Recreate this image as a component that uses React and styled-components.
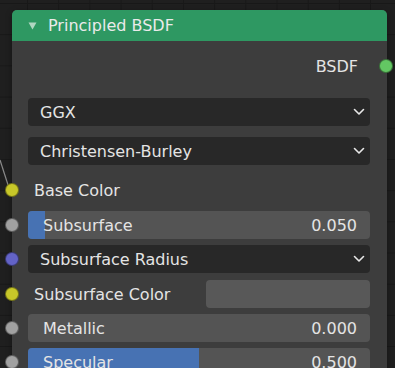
import React from 'react';
import styled, { createGlobalStyle } from 'styled-components';

const GlobalStyle = createGlobalStyle`
  html, body {
    margin: 0;
    padding: 0;
    background: #1f1f1f;
  }
`;

const SOCKET = {
  shader: '#63c763',
  color: '#c7c729',
  float: '#a1a1a1',
  vector: '#6363c7',
};

const Canvas = styled.div`
  position: relative;
  height: 368px;
  overflow: hidden;
  box-sizing: border-box;
  padding: 10px 0 0 12px;
  font-family: 'DejaVu Sans', 'Noto Sans', sans-serif;
  font-size: 16px;
  color: #e4e4e4;
  background-color: #1f1f1f;
  background-image:
    linear-gradient(to right, #181818 1px, transparent 1px),
    linear-gradient(to bottom, #181818 1px, transparent 1px);
  background-size: 31.2px 31.2px;
  background-position: 27px 3px;
`;

const Wire = styled.svg`
  position: absolute;
  left: 0;
  top: 150px;
`;

const Node = styled.div`
  position: relative;
  width: 375px;
  background: #3d3d3d;
  border-radius: 5px;
  box-shadow: 0 2px 6px rgba(0, 0, 0, 0.35);
`;

const Header = styled.div`
  display: flex;
  align-items: center;
  gap: 11px;
  height: 31px;
  padding-left: 16px;
  background: #2e9862;
  border-radius: 5px 5px 0 0;
`;

const Title = styled.span`
  color: #eaeaea;
  line-height: 1;
`;

const Body = styled.div`
  display: flex;
  flex-direction: column;
  padding: 13px 17px 0 16px;
`;

const Row = styled.div`
  position: relative;
  display: flex;
  align-items: center;
  height: ${p => p.$h || 28}px;
  margin-top: ${p => p.$mt || 0}px;
  justify-content: ${p => (p.$end ? 'flex-end' : 'flex-start')};
`;

const Socket = styled.span`
  position: absolute;
  top: 50%;
  ${p => (p.$out ? 'right: -23px;' : 'left: -23px;')}
  width: 14px;
  height: 14px;
  margin-top: -7px;
  box-sizing: border-box;
  border-radius: 50%;
  background: ${p => p.$color};
  border: 1px solid rgba(0, 0, 0, 0.4);
`;

const OutLabel = styled.span`
  padding-right: 12px;
`;

const Label = styled.span`
  padding-left: 6px;
  flex: 1;
`;

const Dropdown = styled.div`
  flex: 1;
  height: 28px;
  display: flex;
  align-items: center;
  justify-content: space-between;
  padding: 0 5px 0 12px;
  box-sizing: border-box;
  background: #282828;
  border-radius: 4px;
`;

const Slider = styled.div`
  position: relative;
  flex: 1;
  height: 28px;
  display: flex;
  align-items: center;
  justify-content: space-between;
  padding: 0 13px 0 15px;
  box-sizing: border-box;
  background: #545454;
  border-radius: 4px;
  overflow: hidden;
`;

const Fill = styled.span`
  position: absolute;
  left: 0;
  top: 0;
  bottom: 0;
  background: #4772b3;
`;

const SliderText = styled.span`
  position: relative;
`;

const Swatch = styled.div`
  width: 164px;
  height: 28px;
  background: #585858;
  border-radius: 4px;
`;

const Chevron = () => (
  <svg width="12" height="8" viewBox="0 0 12 8">
    <path d="M1.5 1.5 L6 6 L10.5 1.5" fill="none" stroke="#e8e8e8" strokeWidth="1.6" strokeLinecap="round" strokeLinejoin="round" />
  </svg>
);

const Triangle = () => (
  <svg width="9" height="8" viewBox="0 0 9 8">
    <path d="M0.5 0.5 H8.5 L4.5 7.5 Z" fill="rgba(220,235,225,0.75)" />
  </svg>
);

const SliderRow = ({ label, value, socket, mt }) => (
  <Row $mt={mt}>
    <Socket $color={socket} />
    <Slider>
      <Fill style={{ width: `${value * 100}%` }} />
      <SliderText>{label}</SliderText>
      <SliderText>{value.toFixed(3)}</SliderText>
    </Slider>
  </Row>
);

const App = () => (
  <Canvas>
    <GlobalStyle />
    <Wire width="14" height="40" viewBox="0 0 14 40">
      <path d="M0 10 L9 38" stroke="#8a8a8a" strokeWidth="1.2" fill="none" />
    </Wire>
    <Node>
      <Header>
        <Triangle />
        <Title>Principled BSDF</Title>
      </Header>
      <Body>
        <Row $h={24} $end>
          <OutLabel>BSDF</OutLabel>
          <Socket $out $color={SOCKET.shader} />
        </Row>
        <Row $mt={20}>
          <Dropdown>
            <span>GGX</span>
            <Chevron />
          </Dropdown>
        </Row>
        <Row $mt={11}>
          <Dropdown>
            <span>Christensen-Burley</span>
            <Chevron />
          </Dropdown>
        </Row>
        <Row $mt={11}>
          <Socket $color={SOCKET.color} />
          <Label>Base Color</Label>
        </Row>
        <SliderRow label="Subsurface" value={0.05} socket={SOCKET.float} mt={7} />
        <Row $mt={6}>
          <Socket $color={SOCKET.vector} />
          <Dropdown>
            <span>Subsurface Radius</span>
            <Chevron />
          </Dropdown>
        </Row>
        <Row $mt={7}>
          <Socket $color={SOCKET.color} />
          <Label>Subsurface Color</Label>
          <Swatch />
        </Row>
        <SliderRow label="Metallic" value={0} socket={SOCKET.float} mt={6} />
        <SliderRow label="Specular" value={0.5} socket={SOCKET.float} mt={6} />
      </Body>
    </Node>
  </Canvas>
);

export default App;
